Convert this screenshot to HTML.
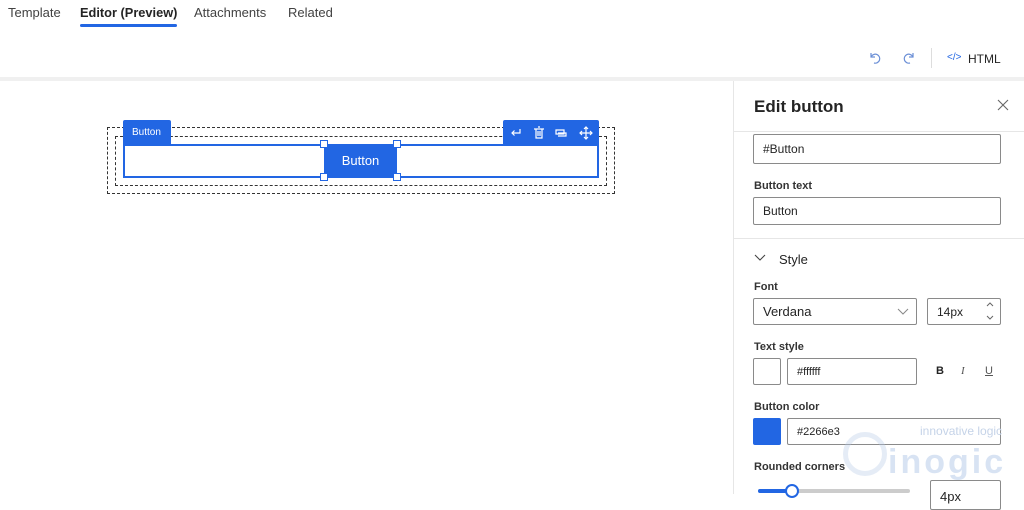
<!DOCTYPE html>
<html><head><style>
*{box-sizing:border-box;margin:0;padding:0}
body{width:1024px;height:494px;overflow:hidden;background:#fff;font-family:"Liberation Sans",sans-serif;color:#242424;position:relative}
.a{position:absolute}
.tab{position:absolute;top:5px;font-size:13px;color:#424242}
.inp{position:absolute;border:1px solid #8a8a8a;border-radius:2px;font-size:12px;padding-left:9px;display:flex;align-items:center;background:#fff}
.lbl{position:absolute;font-size:11px;font-weight:bold;color:#333;left:754px}
.h{position:absolute;width:8px;height:8px;background:#fff;border:1px solid #2266e3}
</style></head><body>
<div class="tab" style="left:8px">Template</div>
<div class="tab" style="left:80px;font-weight:bold;color:#242424;font-size:12.8px">Editor (Preview)</div>
<div class="a" style="left:80px;top:24px;width:97px;height:3px;background:#2266e3;border-radius:2px"></div>
<div class="tab" style="left:194px">Attachments</div>
<div class="tab" style="left:288px">Related</div>

<svg class="a" style="left:868px;top:51px" width="14" height="14" viewBox="0 0 14 14" fill="none" stroke="#6b8fd6" stroke-width="1.2"><path d="M3 2v4h4"/><path d="M3.3 5.5A4.5 4.5 0 1 1 6 12"/></svg>
<svg class="a" style="left:902px;top:51px" width="14" height="14" viewBox="0 0 14 14" fill="none" stroke="#6b8fd6" stroke-width="1.2"><path d="M11 2v4H7"/><path d="M10.7 5.5A4.5 4.5 0 1 0 8 12"/></svg>
<div class="a" style="left:931px;top:48px;width:1px;height:20px;background:#ddd"></div>
<div class="a" style="left:947px;top:52px;font-size:10px;color:#2266e3">&lt;/&gt;</div>
<div class="a" style="left:968px;top:52px;font-size:12px">HTML</div>
<div class="a" style="left:0;top:77px;width:1024px;height:4px;background:#f0f0f0"></div>

<div class="a" style="left:107px;top:127px;width:508px;height:67px;border:1px dashed #333"></div>
<div class="a" style="left:115px;top:136px;width:492px;height:50px;border:1px dashed #333"></div>
<div class="a" style="left:123px;top:144px;width:476px;height:34px;border:2px solid #2266e3;background:#fff"></div>
<div class="a" style="left:123px;top:120px;width:48px;height:25px;background:#2266e3;border-radius:2px 2px 0 0;color:#fff;font-size:10px;padding:7px 0 0 9px">Button</div>
<div class="a" style="left:503px;top:120px;width:96px;height:25px;background:#2266e3;border-radius:2px 2px 0 0"></div>
<svg class="a" style="left:509px;top:125px" width="86" height="16" viewBox="0 0 86 16" fill="none" stroke="#fff" stroke-width="1.2"><path d="M11 4v4H3M5.5 5.5L3 8l2.5 2.5"/><path d="M25 4h10M27 4v9h6V4M29 2h2M29 6v5M31 6v5"/><path d="M47 5h8v4h-8zM49 8h8v3h-8"/><path d="M77 2v12M71 8h12M75 4l2-2 2 2M75 12l2 2 2-2M73 6l-2 2 2 2M81 6l2 2-2 2"/></svg>
<div class="a" style="left:324px;top:144px;width:73px;height:33px;background:#2266e3;color:#fff;font-size:13px;text-align:center;line-height:33px">Button</div>
<div class="h" style="left:320px;top:140px"></div><div class="h" style="left:393px;top:140px"></div>
<div class="h" style="left:320px;top:173px"></div><div class="h" style="left:393px;top:173px"></div>

<div class="a" style="left:733px;top:81px;width:1px;height:413px;background:#e6e6e6"></div>
<div class="a" style="left:754px;top:97px;font-size:17px;font-weight:bold;color:#242424">Edit button</div>
<svg class="a" style="left:997px;top:99px" width="12" height="12" stroke="#666" stroke-width="1.1"><path d="M1 1l10 10M11 1L1 11"/></svg>
<div class="a" style="left:734px;top:131px;width:290px;height:1px;background:#e6e6e6"></div>
<div class="inp" style="left:753px;top:134px;width:248px;height:30px">#Button</div>
<div class="lbl" style="top:180px">Button text</div>
<div class="inp" style="left:753px;top:197px;width:248px;height:28px">Button</div>
<div class="a" style="left:734px;top:238px;width:290px;height:1px;background:#e6e6e6"></div>
<svg class="a" style="left:754px;top:254px" width="12" height="8" fill="none" stroke="#444" stroke-width="1.1"><path d="M1 1l5 5 5-5"/></svg>
<div class="a" style="left:779px;top:252px;font-size:13px">Style</div>
<div class="lbl" style="top:281px">Font</div>
<div class="inp" style="left:753px;top:298px;width:164px;height:27px;font-size:13px">Verdana</div>
<svg class="a" style="left:897px;top:308px" width="12" height="8" fill="none" stroke="#888" stroke-width="1"><path d="M1 1l5 5 5-5"/></svg>
<div class="inp" style="left:927px;top:298px;width:74px;height:27px">14px</div>
<svg class="a" style="left:985px;top:301px" width="10" height="20" fill="none" stroke="#666" stroke-width="1"><path d="M2 5l3-3 3 3M2 15l3 3 3-3"/></svg>
<div class="lbl" style="top:341px">Text style</div>
<div class="inp" style="left:753px;top:358px;width:28px;height:27px"></div>
<div class="inp" style="left:787px;top:358px;width:130px;height:27px;font-size:11px">#ffffff</div>
<div class="a" style="left:936px;top:365px;font-size:11px;font-weight:bold">B</div>
<div class="a" style="left:961px;top:365px;font-size:11px;font-style:italic;font-family:'Liberation Serif',serif;color:#555">I</div>
<div class="a" style="left:985px;top:365px;font-size:11px;text-decoration:underline;color:#555">U</div>
<div class="lbl" style="top:401px">Button color</div>
<div class="a" style="left:753px;top:418px;width:28px;height:27px;background:#2266e3;border-radius:2px"></div>
<div class="inp" style="left:787px;top:418px;width:214px;height:27px;font-size:11px">#2266e3</div>
<div class="a" style="left:843px;top:432px;width:44px;height:44px;border:5px solid rgba(180,200,230,.35);border-radius:50%"></div>
<div class="a" style="left:920px;top:424px;font-size:12px;color:#c5d3e8">innovative logic</div>
<div class="a" style="left:888px;top:443px;font-size:34px;font-weight:bold;color:rgba(190,208,235,.6);letter-spacing:3px">inogic</div>
<div class="lbl" style="top:461px">Rounded corners</div>
<div class="a" style="left:758px;top:489px;width:152px;height:4px;background:#ccc;border-radius:2px"></div>
<div class="a" style="left:758px;top:489px;width:34px;height:4px;background:#2266e3;border-radius:2px"></div>
<div class="a" style="left:785px;top:484px;width:14px;height:14px;border:2px solid #2266e3;background:#fff;border-radius:50%"></div>
<div class="inp" style="left:930px;top:480px;width:71px;height:30px;font-size:13px;align-items:flex-start;padding-top:8px">4px</div>
</body></html>
